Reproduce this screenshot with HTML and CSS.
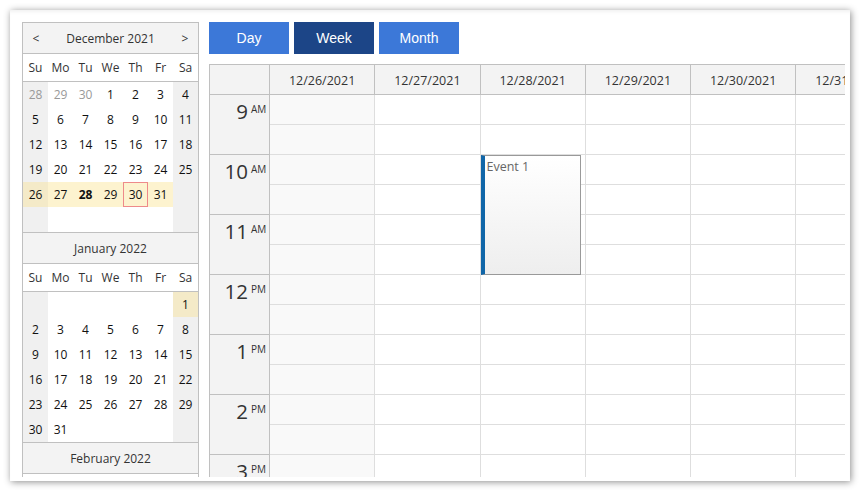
FILE: index.html
```html
<!DOCTYPE html>
<html>
<head>
<meta charset="utf-8">
<link rel="stylesheet" href="styles.css">
</head>
<body>
<div class="frame">
  <div class="app">
    <div class="nav">
      <div class="month">
        <div class="mtitle"><span class="arrow">&lt;</span><span class="mname">December 2021</span><span class="arrow">&gt;</span></div>
        <div class="dnames"><span>Su</span><span>Mo</span><span>Tu</span><span>We</span><span>Th</span><span>Fr</span><span>Sa</span></div>
        <div class="days">
          <span class="we other">28</span><span class="other">29</span><span class="other">30</span><span>1</span><span>2</span><span>3</span><span class="we">4</span>
          <span class="we">5</span><span>6</span><span>7</span><span>8</span><span>9</span><span>10</span><span class="we">11</span>
          <span class="we">12</span><span>13</span><span>14</span><span>15</span><span>16</span><span>17</span><span class="we">18</span>
          <span class="we">19</span><span>20</span><span>21</span><span>22</span><span>23</span><span>24</span><span class="we">25</span>
          <span class="we sel">26</span><span class="sel">27</span><span class="sel bold">28</span><span class="sel">29</span><span class="sel today">30</span><span class="sel">31</span><span class="we"></span>
          <span class="we"></span><span></span><span></span><span></span><span></span><span></span><span class="we"></span>
        </div>
      </div>
      <div class="month">
        <div class="mtitle"><span class="mname">January 2022</span></div>
        <div class="dnames"><span>Su</span><span>Mo</span><span>Tu</span><span>We</span><span>Th</span><span>Fr</span><span>Sa</span></div>
        <div class="days">
          <span class="we"></span><span></span><span></span><span></span><span></span><span></span><span class="we sel">1</span>
          <span class="we">2</span><span>3</span><span>4</span><span>5</span><span>6</span><span>7</span><span class="we">8</span>
          <span class="we">9</span><span>10</span><span>11</span><span>12</span><span>13</span><span>14</span><span class="we">15</span>
          <span class="we">16</span><span>17</span><span>18</span><span>19</span><span>20</span><span>21</span><span class="we">22</span>
          <span class="we">23</span><span>24</span><span>25</span><span>26</span><span>27</span><span>28</span><span class="we">29</span>
          <span class="we">30</span><span>31</span><span></span><span></span><span></span><span></span><span class="we"></span>
        </div>
      </div>
      <div class="month">
        <div class="mtitle"><span class="mname">February 2022</span></div>
        <div class="dnames-empty"></div>
      </div>
    </div>
    <div class="sched">
      <div class="toolbar">
        <button class="btn">Day</button>
        <button class="btn active">Week</button>
        <button class="btn">Month</button>
      </div>
      <div class="cal">
        <div class="cal-head">
          <div class="corner"></div>
          <div class="dh">12/26/2021</div>
          <div class="dh">12/27/2021</div>
          <div class="dh">12/28/2021</div>
          <div class="dh">12/29/2021</div>
          <div class="dh">12/30/2021</div>
          <div class="dh">12/31/2021</div>
        </div>
        <div class="cal-body">
          <div class="rowhead">
            <div class="hour"><span class="hn">9</span><span class="ap">AM</span></div>
            <div class="hour"><span class="hn">10</span><span class="ap">AM</span></div>
            <div class="hour"><span class="hn">11</span><span class="ap">AM</span></div>
            <div class="hour"><span class="hn">12</span><span class="ap">PM</span></div>
            <div class="hour"><span class="hn">1</span><span class="ap">PM</span></div>
            <div class="hour"><span class="hn">2</span><span class="ap">PM</span></div>
            <div class="hour"><span class="hn">3</span><span class="ap">PM</span></div>
          </div>
          <div class="col wkend"><i></i><i></i><i></i><i></i><i></i><i></i><i></i><i></i><i></i><i></i><i></i><i></i><i></i><i></i></div>
          <div class="col"><i></i><i></i><i></i><i></i><i></i><i></i><i></i><i></i><i></i><i></i><i></i><i></i><i></i><i></i></div>
          <div class="col"><i></i><i></i><i></i><i></i><i></i><i></i><i></i><i></i><i></i><i></i><i></i><i></i><i></i><i></i>
            <div class="event"><span>Event 1</span></div>
          </div>
          <div class="col"><i></i><i></i><i></i><i></i><i></i><i></i><i></i><i></i><i></i><i></i><i></i><i></i><i></i><i></i></div>
          <div class="col"><i></i><i></i><i></i><i></i><i></i><i></i><i></i><i></i><i></i><i></i><i></i><i></i><i></i><i></i></div>
          <div class="col"><i></i><i></i><i></i><i></i><i></i><i></i><i></i><i></i><i></i><i></i><i></i><i></i><i></i><i></i></div>
        </div>
      </div>
    </div>
  </div>
</div>
</body>
</html>
```

FILE: styles.css
```css
* { box-sizing: border-box; }
html, body { margin: 0; padding: 0; background: #ffffff; }
body { font-family: "Open Sans", "Noto Sans", sans-serif; color: #333; }

.frame {
  margin: 10px;
  width: 840px;
  height: 471px;
  background: #fff;
  box-shadow: 1px 1px 7px rgba(0,0,0,0.45), inset 0 4px 4px -3px rgba(0,0,0,0.08);
  padding: 12px 5px 0 12px;
}
.app {
  display: flex;
  gap: 10px;
  height: 455px;
  overflow: hidden;
}

/* navigator */
.nav {
  width: 177px;
  flex-shrink: 0;
  border-left: 1px solid #c0c0c0;
  border-right: 1px solid #c0c0c0;
  font-size: 12px;
}
.month { border-top: 1px solid #c0c0c0; }
.mtitle {
  height: 31px;
  border-bottom: 1px solid #c0c0c0;
  background: #f3f3f3;
  display: flex;
  align-items: center;
  justify-content: center;
  padding: 0 8px;
  color: #333;
}
.mtitle .mname { flex: 1; text-align: center; }
.mtitle .arrow { width: 10px; text-align: center; }
.dnames {
  height: 28px;
  border-bottom: 1px solid #c0c0c0;
  display: grid;
  grid-template-columns: repeat(7, 25px);
  align-items: center;
  text-align: center;
  color: #333;
  background: #fff;
}
.dnames-empty { height: 28px; background: #fff; }
.days {
  display: grid;
  grid-template-columns: repeat(7, 25px);
  grid-auto-rows: 25px;
}
.days span {
  text-align: center;
  line-height: 25px;
  color: #111;
  background: #fff;
}
.days span.we { background: #f0f0f0; }
.days span.other { color: #999; }
.days span.sel { background: #fdf3cf; }
.days span.we.sel { background: #f4eac8; }
.days span.bold { font-weight: bold; }
.days span.today { border: 1px solid #ee8a8a; line-height: 23px; }

/* scheduler */
.sched { flex: 1; min-width: 0; display: flex; flex-direction: column; }
.toolbar { display: flex; gap: 5px; height: 32px; margin-bottom: 10px; }
.btn {
  width: 80px;
  height: 32px;
  border: none;
  margin: 0;
  padding: 0;
  background: #3c78d8;
  color: #fff;
  font-family: "Liberation Sans", Arial, sans-serif;
  font-size: 14px;
}
.btn.active { background: #1c4587; }

.cal {
  flex: 1;
  border-top: 1px solid #c0c0c0;
  border-left: 1px solid #c0c0c0;
  overflow: hidden;
}
.cal-head {
  display: flex;
  height: 30px;
  border-bottom: 1px solid #c0c0c0;
  background: #f3f3f3;
  width: max-content;
}
.corner { width: 60px; flex-shrink: 0; border-right: 1px solid #c0c0c0; }
.dh {
  width: 105.25px;
  flex-shrink: 0;
  border-right: 1px solid #c0c0c0;
  text-align: center;
  line-height: 31px;
  font-size: 12.5px;
  color: #333;
  white-space: nowrap;
}
.cal-body { display: flex; width: max-content; }
.rowhead {
  width: 60px;
  flex-shrink: 0;
  border-right: 1px solid #c0c0c0;
  background: #f3f3f3;
}
.hour {
  height: 60px;
  border-bottom: 1px solid #c0c0c0;
  display: flex;
  justify-content: flex-end;
  align-items: flex-start;
  padding: 4px 5px 0 0;
  color: #333;
}
.hn { font-size: 20.5px; line-height: 24px; }
.ap { font-size: 10px; line-height: 12px; margin-left: 3px; margin-top: 4px; width: 13px; }

.col {
  width: 105.25px;
  flex-shrink: 0;
  border-right: 1px solid #dedede;
  position: relative;
  background: #fff;
}
.col.wkend { background: #f9f9f9; }
.col i { display: block; height: 30px; border-bottom: 1px solid #dedede; }
.event {
  position: absolute;
  top: 60px;
  left: 0;
  width: 100px;
  height: 120px;
  border: 1px solid #999;
  border-left: 4px solid #1066a8;
  background: linear-gradient(#ffffff, #eeeeee);
  padding: 3px 0 0 2px;
  font-size: 12.5px;
  line-height: 16px;
  color: #666;
}
```
